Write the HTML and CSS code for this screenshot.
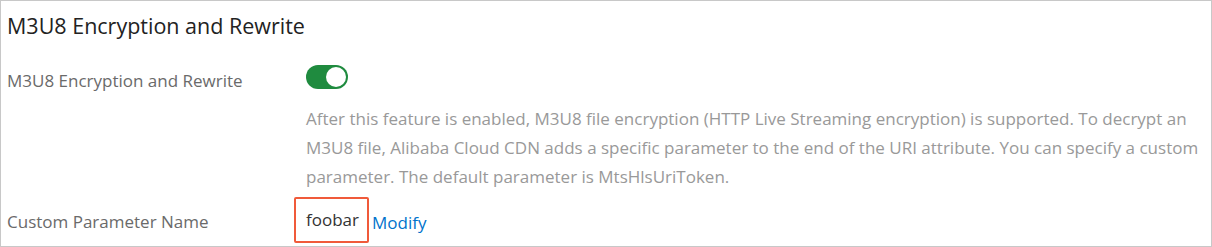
FILE: index.html
```html
<!DOCTYPE html>
<html>
<head>
<meta charset="utf-8">
<link rel="stylesheet" href="styles.css">
</head>
<body>
<div class="panel">
  <h2 class="title">M3U8 Encryption and Rewrite</h2>
  <div class="row row-switch">
    <div class="label">M3U8 Encryption and Rewrite</div>
    <div class="value">
      <span class="switch"><span class="knob"></span></span>
    </div>
  </div>
  <div class="row row-desc">
    <div class="label"></div>
    <p class="desc">After this feature is enabled, M3U8 file encryption (HTTP Live Streaming encryption) is supported. To decrypt an M3U8 file, Alibaba Cloud CDN adds a specific parameter to the end of the URI attribute. You can specify a custom parameter. The default parameter is MtsHlsUriToken.</p>
  </div>
  <div class="row row-param">
    <div class="label">Custom Parameter Name</div>
    <div class="value">
      <span class="hl">foobar</span><a class="link" href="#">Modify</a>
    </div>
  </div>
</div>
</body>
</html>
```
FILE: styles.css
```css
html, body {
  margin: 0;
  padding: 0;
  background: #fff;
}
body {
  font-family: "Open Sans", "Noto Sans", sans-serif;
}
.panel {
  width: 1212px;
  height: 247px;
  box-sizing: border-box;
  border: 1px solid #c8c8c8;
  padding: 0 0 0 6px;
  overflow: hidden;
}
.title {
  margin: 0;
  padding-top: 11px;
  font-size: 21.5px;
  line-height: 28px;
  font-weight: 400;
  color: #222;
}
.row {
  display: flex;
}
.label {
  width: 299px;
  flex: none;
  font-size: 17px;
  color: #6a6a6a;
}
.row-switch {
  margin-top: 25px;
  height: 24px;
  align-items: center;
}
.row-switch .label {
  padding-top: 6px;
}
.switch {
  display: block;
  width: 42px;
  height: 24px;
  border-radius: 12px;
  background: #1f8b3f;
  position: relative;
}
.knob {
  position: absolute;
  right: 2px;
  top: 2px;
  width: 20px;
  height: 20px;
  border-radius: 50%;
  background: #fff;
}
.desc {
  margin: 0;
  padding-top: 15px;
  font-size: 17px;
  line-height: 29px;
  color: #999;
  width: 900px;
}
.row-param {
  margin-top: 6px;
  align-items: center;
}
.row-param .label {
  padding-top: 2px;
}
.row-param .value {
  display: flex;
  align-items: center;
  margin-left: -12px;
}
.hl {
  display: block;
  box-sizing: border-box;
  height: 46px;
  padding: 0 8px 0 10px;
  line-height: 42px;
  border: 2px solid #f05a3a;
  border-radius: 2px;
  font-size: 17px;
  color: #333;
}
.link {
  font-size: 17px;
  color: #0073cc;
  text-decoration: none;
  margin-left: 3px;
  padding-top: 4px;
}
```
